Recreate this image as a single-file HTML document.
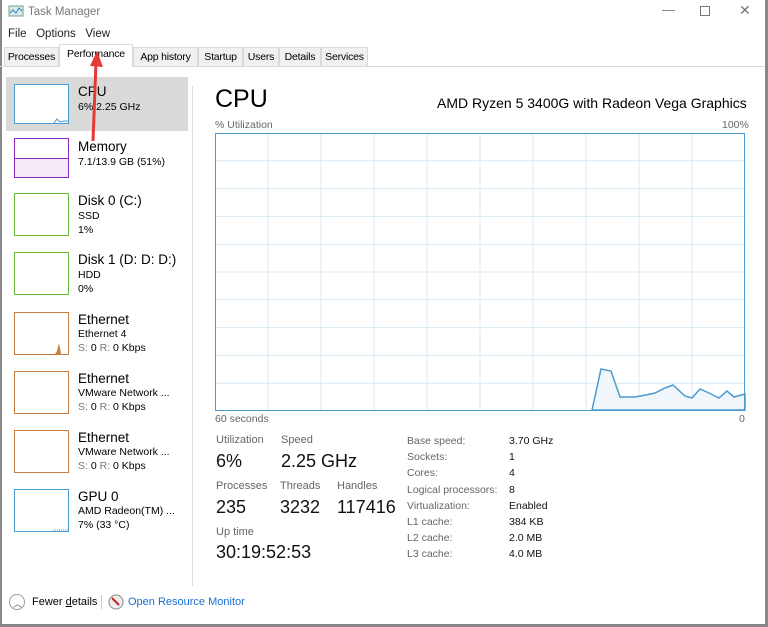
<!DOCTYPE html><html><head><style>
*{margin:0;padding:0;box-sizing:border-box}
body{width:768px;height:627px;background:#fff;font-family:"Liberation Sans",sans-serif;position:relative;overflow:hidden;color:#000}
.a{position:absolute;white-space:nowrap}
.tab{position:absolute;top:47px;height:20px;border:1px solid #d9d9d9;background:#f0f0f0;font-size:10.5px;padding-top:3px;text-align:center;white-space:nowrap;overflow:hidden;letter-spacing:-0.2px;color:#000}
.th{position:absolute;left:14px;width:55px;border:1px solid}
.n{font-size:13.5px}.s{font-size:10.5px}
.g{color:#666;font-size:10.5px}
.big{font-size:18px;color:#111}
</style></head><body>
<div class="a" style="left:0;top:0;width:2px;height:627px;background:#888"></div>
<div class="a" style="right:0;top:0;width:3px;height:627px;background:#888"></div>
<div class="a" style="left:0;bottom:0;width:768px;height:3px;background:#888"></div>
<svg class="a" style="left:8px;top:5px" width="16" height="14"><rect x="1" y="1" width="14" height="10" fill="#dfe8ee" stroke="#6a8"/><path d="M2 8 L5 5 L8 8 L11 3 L14 6" stroke="#28a" fill="none"/></svg>
<div class="a" style="left:28px;top:6px;font-size:11.5px;color:#777">Task Manager</div>
<div class="a" style="left:662px;top:2px;font-size:13px;color:#777">—</div>
<div class="a" style="left:700px;top:6px;width:10px;height:10px;border:1px solid #777"></div>
<div class="a" style="left:739px;top:2px;font-size:14px;color:#777">✕</div>
<div class="a" style="left:8px;top:28px;font-size:11.5px;color:#222">File &nbsp;&nbsp;Options &nbsp;&nbsp;View</div>
<div class="a" style="left:0;top:66px;width:765px;height:1px;background:#d9d9d9"></div>
<div class="tab" style="left:4px;width:55px">Processes</div>
<div class="tab" style="left:59px;top:44px;height:23px;width:74px;background:#fff;border-bottom:none">Performance</div>
<div class="tab" style="left:133px;width:65px">App history</div>
<div class="tab" style="left:198px;width:45px">Startup</div>
<div class="tab" style="left:243px;width:36px">Users</div>
<div class="tab" style="left:279px;width:42px">Details</div>
<div class="tab" style="left:321px;width:47px">Services</div>

<div class="a" style="left:6px;top:77px;width:182px;height:54px;background:#d9d9d9"></div>
<div class="a" style="left:192px;top:86px;width:1px;height:500px;background:#ddd"></div>

<div class="th" style="top:84px;height:40px;border-color:#4a9bd0;background:#fff"><svg width="53" height="38" style="position:absolute;left:0;top:0"><path d="M39 38 L42 34 L45 37 L49 36 L53 36" stroke="#4a9bd0" fill="none"/></svg></div>
<div class="a n" style="left:78px;top:84px">CPU</div><div class="a s" style="left:78px;top:101px">6% 2.25 GHz</div>

<div class="th" style="top:138px;height:40px;border-color:#8b2bbd"><div style="position:absolute;left:0;right:0;bottom:0;height:19px;border-top:1px solid #8b2bbd;background:#f3e9f7"></div></div>
<div class="a n" style="left:78px;top:139px">Memory</div><div class="a s" style="left:78px;top:156px">7.1/13.9 GB (51%)</div>

<div class="th" style="top:193px;height:43px;border-color:#6cba3a"></div>
<div class="a n" style="left:78px;top:193px">Disk 0 (C:)</div><div class="a s" style="left:78px;top:210px">SSD</div><div class="a s" style="left:78px;top:224px">1%</div>
<div class="th" style="top:252px;height:43px;border-color:#6cba3a"></div>
<div class="a n" style="left:78px;top:252px">Disk 1 (D: D: D:)</div><div class="a s" style="left:78px;top:269px">HDD</div><div class="a s" style="left:78px;top:283px">0%</div>

<div class="th" style="top:312px;height:43px;border-color:#c87d3e"><svg width="53" height="41" style="position:absolute;left:0;top:0"><path d="M40 41 L42 38 L44 30 L46 41 Z" fill="#c87d3e"/></svg></div>
<div class="a n" style="left:78px;top:312px">Ethernet</div><div class="a s" style="left:78px;top:328px">Ethernet 4</div><div class="a s" style="left:78px;top:342px"><span style="color:#777">S:</span> 0 <span style="color:#777">R:</span> 0 Kbps</div>
<div class="th" style="top:371px;height:43px;border-color:#c87d3e"></div>
<div class="a n" style="left:78px;top:371px">Ethernet</div><div class="a s" style="left:78px;top:387px">VMware Network ...</div><div class="a s" style="left:78px;top:401px"><span style="color:#777">S:</span> 0 <span style="color:#777">R:</span> 0 Kbps</div>
<div class="th" style="top:430px;height:43px;border-color:#c87d3e"></div>
<div class="a n" style="left:78px;top:430px">Ethernet</div><div class="a s" style="left:78px;top:446px">VMware Network ...</div><div class="a s" style="left:78px;top:460px"><span style="color:#777">S:</span> 0 <span style="color:#777">R:</span> 0 Kbps</div>
<div class="th" style="top:489px;height:43px;border-color:#4a9bd0"><svg width="53" height="41" style="position:absolute;left:0;top:0"><path d="M38 40 L53 40" stroke="#4a9bd0" stroke-dasharray="1 1"/></svg></div>
<div class="a n" style="left:78px;top:489px">GPU 0</div><div class="a s" style="left:78px;top:505px">AMD Radeon(TM) ...</div><div class="a s" style="left:78px;top:519px">7% (33 °C)</div>

<div class="a" style="left:215px;top:85px;font-size:25px">CPU</div>
<div class="a" style="left:437px;top:95px;font-size:14px">AMD Ryzen 5 3400G with Radeon Vega Graphics</div>
<div class="a g" style="left:215px;top:119px">% Utilization</div>
<div class="a g" style="left:722px;top:119px">100%</div>
<svg class="a" style="left:215px;top:133px" width="531" height="278">
<g stroke="#d9eaf5" stroke-width="1">
<path d="M53 0V278M106 0V278M159 0V278M212 0V278M265 0V278M318 0V278M371 0V278M424 0V278M477 0V278"/>
<path d="M0 27.8H531M0 55.6H531M0 83.4H531M0 111.2H531M0 139H531M0 166.8H531M0 194.6H531M0 222.4H531M0 250.2H531"/>
</g>
<path d="M377 277 L386 236 L396 238 L405 264 L420 264 L431 262 L440 260 L450 255 L458 252 L470 263 L477 265 L485 256 L494 260 L504 265 L512 258 L519 264 L530 261 L530 277 Z" fill="#f1f6fa" stroke="#4a9bd0" stroke-width="1.5"/>
<rect x="0.5" y="0.5" width="529" height="277" fill="none" stroke="#4a9bd0"/>
</svg>
<div class="a g" style="left:215px;top:413px">60 seconds</div>
<div class="a g" style="left:739px;top:413px">0</div>

<div class="a g" style="left:216px;top:434px;font-size:11px">Utilization</div><div class="a g" style="left:281px;top:434px;font-size:11px">Speed</div>
<div class="a big" style="left:216px;top:451px">6%</div><div class="a big" style="left:281px;top:451px">2.25 GHz</div>
<div class="a g" style="left:216px;top:480px;font-size:11px">Processes</div><div class="a g" style="left:280px;top:480px;font-size:11px">Threads</div><div class="a g" style="left:337px;top:480px;font-size:11px">Handles</div>
<div class="a big" style="left:216px;top:497px">235</div><div class="a big" style="left:280px;top:497px">3232</div><div class="a big" style="left:337px;top:497px">117416</div>
<div class="a g" style="left:216px;top:526px;font-size:11px">Up time</div>
<div class="a big" style="left:216px;top:542px">30:19:52:53</div>
<div class="a g" style="left:407px;top:433px;line-height:16.2px">Base speed:<br>Sockets:<br>Cores:<br>Logical processors:<br>Virtualization:<br>L1 cache:<br>L2 cache:<br>L3 cache:</div>
<div class="a" style="left:509px;top:433px;line-height:16.2px;font-size:10.5px;color:#111">3.70 GHz<br>1<br>4<br>8<br>Enabled<br>384 KB<br>2.0 MB<br>4.0 MB</div>

<div class="a" style="left:9px;top:594px;width:16px;height:16px;border:1px solid #999;border-radius:50%"></div>
<div class="a" style="left:13px;top:597px;font-size:9px;color:#666">︿</div>
<div class="a" style="left:32px;top:596px;font-size:11px">Fewer <u>d</u>etails</div>
<div class="a" style="left:101px;top:595px;width:1px;height:14px;background:#ccc"></div>
<svg class="a" style="left:108px;top:594px" width="16" height="16"><circle cx="8" cy="8" r="7" fill="#eee" stroke="#888"/><path d="M4 4 L11 11" stroke="#c22" stroke-width="2"/></svg>
<div class="a" style="left:128px;top:596px;font-size:11px;color:#1a6fd1">Open Resource Monitor</div>

<svg class="a" style="left:80px;top:48px" width="30" height="95"><path d="M13 93 L16 14" stroke="#e53935" stroke-width="3"/><path d="M17 3 L23 19 L10 18 Z" fill="#e53935"/></svg>
</body></html>
